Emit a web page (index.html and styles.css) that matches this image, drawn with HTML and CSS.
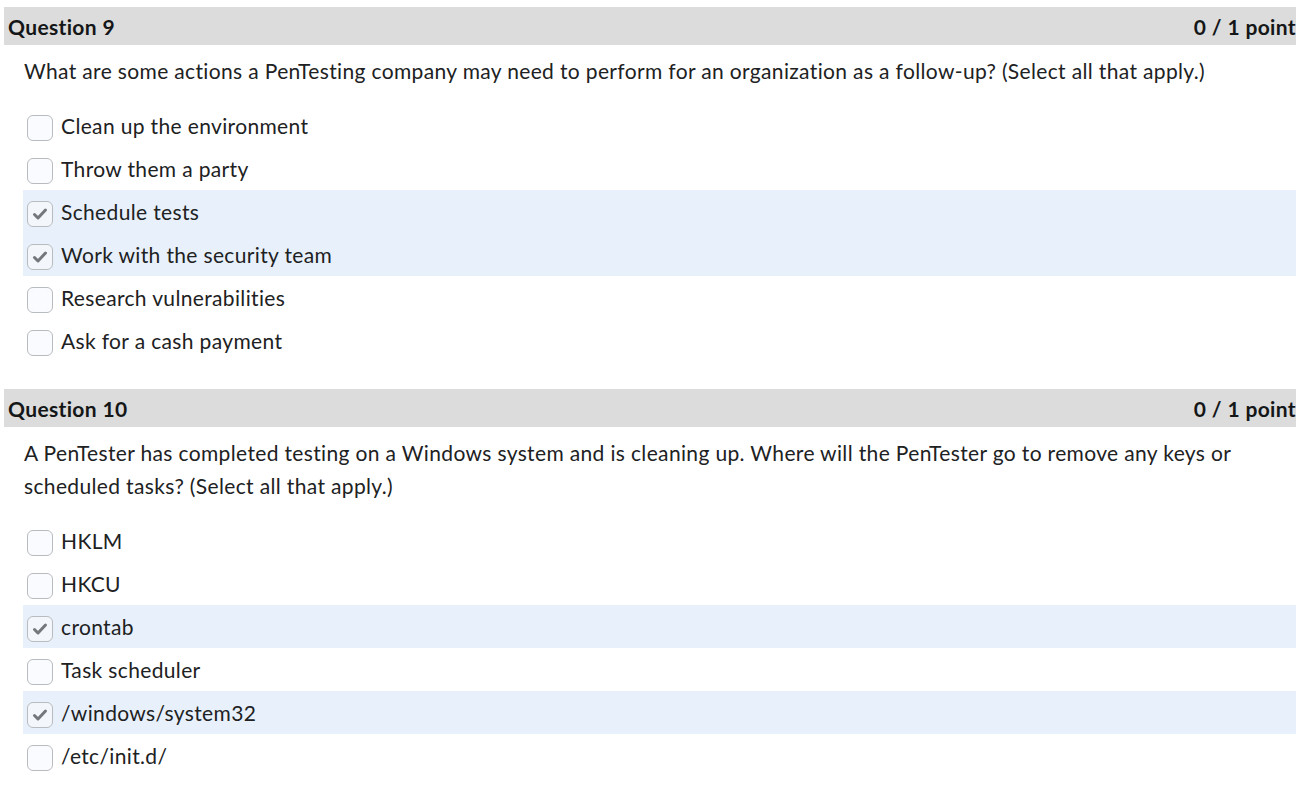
FILE: index.html
```html
<!DOCTYPE html>
<html>
<head>
<meta charset="utf-8">
<link rel="stylesheet" href="styles.css">
</head>
<body>
<div class="page">
  <section class="question">
    <div class="qhead"><span class="qtitle">Question 9</span><span class="qscore">0 / 1 point</span></div>
    <div class="qbody">
      <p class="qtext">What are some actions a PenTesting company may need to perform for an organization as a follow-up? (Select all that apply.)</p>
      <ul class="options">
        <li class="opt"><span class="box"></span><span>Clean up the environment</span></li>
        <li class="opt"><span class="box"></span><span>Throw them a party</span></li>
        <li class="opt sel"><span class="box"><svg viewBox="0 0 26 26" width="26" height="26"><path d="M7.5 13.5 L11 17 L18.5 9" fill="none" stroke="#74787b" stroke-width="3" stroke-linecap="round" stroke-linejoin="round"/></svg></span><span>Schedule tests</span></li>
        <li class="opt sel"><span class="box"><svg viewBox="0 0 26 26" width="26" height="26"><path d="M7.5 13.5 L11 17 L18.5 9" fill="none" stroke="#74787b" stroke-width="3" stroke-linecap="round" stroke-linejoin="round"/></svg></span><span>Work with the security team</span></li>
        <li class="opt"><span class="box"></span><span>Research vulnerabilities</span></li>
        <li class="opt"><span class="box"></span><span>Ask for a cash payment</span></li>
      </ul>
    </div>
  </section>
  <section class="question">
    <div class="qhead"><span class="qtitle">Question 10</span><span class="qscore">0 / 1 point</span></div>
    <div class="qbody">
      <p class="qtext">A PenTester has completed testing on a Windows system and is cleaning up. Where will the PenTester go to remove any keys or scheduled tasks? (Select all that apply.)</p>
      <ul class="options">
        <li class="opt"><span class="box"></span><span>HKLM</span></li>
        <li class="opt"><span class="box"></span><span>HKCU</span></li>
        <li class="opt sel"><span class="box"><svg viewBox="0 0 26 26" width="26" height="26"><path d="M7.5 13.5 L11 17 L18.5 9" fill="none" stroke="#74787b" stroke-width="3" stroke-linecap="round" stroke-linejoin="round"/></svg></span><span>crontab</span></li>
        <li class="opt"><span class="box"></span><span>Task scheduler</span></li>
        <li class="opt sel"><span class="box"><svg viewBox="0 0 26 26" width="26" height="26"><path d="M7.5 13.5 L11 17 L18.5 9" fill="none" stroke="#74787b" stroke-width="3" stroke-linecap="round" stroke-linejoin="round"/></svg></span><span>/windows/system32</span></li>
        <li class="opt"><span class="box"></span><span>/etc/init.d/</span></li>
      </ul>
    </div>
  </section>
</div>
</body>
</html>
```

FILE: styles.css
```css
html, body {
  margin: 0;
  padding: 0;
  background: #ffffff;
}
body {
  font-family: Lato, "Noto Sans", sans-serif;
  color: #202122;
  font-size: 21px;
  letter-spacing: 0.35px;
}
.page {
  padding: 7px 0 0 4px;
}
.question {
  margin-bottom: 27px;
}
.qhead {
  display: flex;
  justify-content: space-between;
  align-items: center;
  height: 38px;
  background: #dcdcdc;
  padding-left: 4px;
  font-size: 21px;
  font-weight: bold;
  color: #151617;
}
.qscore {
  white-space: nowrap;
}
.qbody {
  padding-left: 19px;
}
.qtext {
  margin: 9px 0 17px 1px;
  line-height: 33px;
}
.options {
  list-style: none;
  margin: 0;
  padding: 0;
}
.opt {
  display: flex;
  align-items: center;
  height: 43px;
  padding-left: 4px;
  gap: 8px;
}
.opt.sel {
  background: #e8f1fb;
}
.box {
  width: 24px;
  height: 24px;
  border: 1px solid #b9bcbf;
  border-radius: 6px;
  background: #f9fbfe;
  margin-top: 4px;
  flex: none;
  position: relative;
}
.box svg {
  position: absolute;
  left: -1px;
  top: -1px;
}
.opt.sel .box {
  background: #f3f7fc;
}
```
